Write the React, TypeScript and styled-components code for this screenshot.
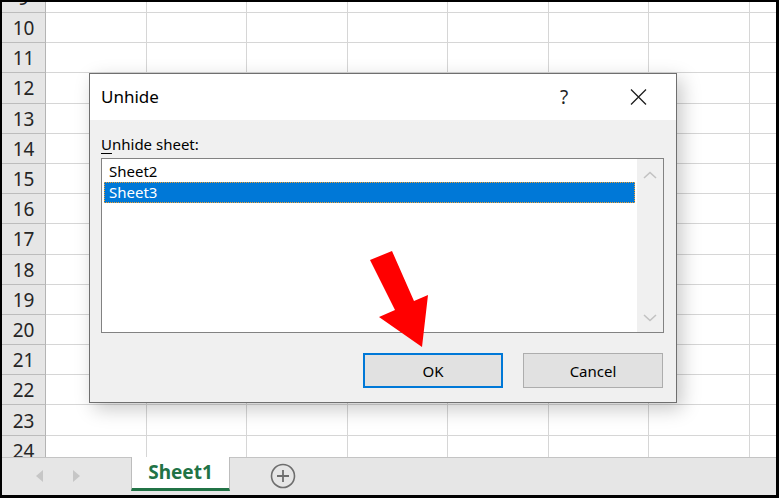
import React from "react"
import styled, { createGlobalStyle } from "styled-components"

const GlobalStyle = createGlobalStyle`
  html, body {
    margin: 0;
    padding: 0;
    background: #ffffff;
  }
  * {
    box-sizing: border-box;
  }
`

const rows = Array.from({ length: 16 }, (_, i) => i + 9)
const cols = Array.from({ length: 8 }, (_, i) => i)
const sheets = ["Sheet2", "Sheet3"]

const App = () => {
  return (
    <>
      <GlobalStyle />
      <Frame>
        <Grid>
          <Rows>
            {rows.map((r) => (
              <Row key={r}>
                <RowHead>{r}</RowHead>
                {cols.map((c) => (
                  <Cell key={c} />
                ))}
              </Row>
            ))}
          </Rows>
        </Grid>

        <TabBar>
          <Nav>
            <NavArrow $dir="left" />
            <NavArrow $dir="right" />
          </Nav>
          <Tab>Sheet1</Tab>
          <AddSheet>
            <svg width="26" height="26" viewBox="0 0 26 26">
              <circle cx="13" cy="13" r="11.5" fill="none" stroke="#6e6e6e" strokeWidth="1.6" />
              <path d="M13 7v12M7 13h12" stroke="#6e6e6e" strokeWidth="1.8" />
            </svg>
          </AddSheet>
        </TabBar>

        <Dialog>
          <TitleBar>
            <Title>Unhide</Title>
            <TitleBtn $w={72}>?</TitleBtn>
            <TitleBtn $w={76}>
              <svg width="17" height="16" viewBox="0 0 17 16">
                <path d="M1 0.5L16 15.5M16 0.5L1 15.5" stroke="#1f1f1f" strokeWidth="1.3" />
              </svg>
            </TitleBtn>
          </TitleBar>
          <Body>
            <Label>
              <u>U</u>nhide sheet:
            </Label>
            <ListBox>
              <Items>
                {sheets.map((s) => (
                  <Item key={s} $selected={s === "Sheet3"}>
                    {s}
                  </Item>
                ))}
              </Items>
              <ScrollBar>
                <svg width="14" height="8" viewBox="0 0 14 8">
                  <path d="M1 7L7 1.5L13 7" fill="none" stroke="#c2c2c2" strokeWidth="1.6" />
                </svg>
                <svg width="14" height="8" viewBox="0 0 14 8">
                  <path d="M1 1L7 6.5L13 1" fill="none" stroke="#c2c2c2" strokeWidth="1.6" />
                </svg>
              </ScrollBar>
            </ListBox>
            <Buttons>
              <Button $default>OK</Button>
              <Button>Cancel</Button>
            </Buttons>
          </Body>
        </Dialog>

        <Arrow width="62" height="100" viewBox="0 0 62 100">
          <polygon points="2,11 24,2 46,52 60,46 54,98 11,68 27,61" fill="#ff0000" />
        </Arrow>
      </Frame>
    </>
  )
}

export default App

const font = `"Noto Sans", "Open Sans", "Liberation Sans", sans-serif`

const Frame = styled.div`
  position: relative;
  width: 779px;
  height: 498px;
  border-style: solid;
  border-color: #000;
  border-width: 2px 3px 3px 2px;
  display: flex;
  flex-direction: column;
  overflow: hidden;
  font-family: ${font};
`

const Grid = styled.div`
  height: 455px;
  overflow: hidden;
  background: #fff;
`

const Rows = styled.div`
  margin-top: -19.2px;
`

const Row = styled.div`
  display: flex;
  height: 30.2px;
`

const RowHead = styled.div`
  width: 44px;
  flex: none;
  background: #e6e6e6;
  border-right: 1px solid #b4b4b4;
  border-bottom: 1px solid #bcbcbc;
  display: flex;
  align-items: center;
  justify-content: center;
  font-size: 19px;
  color: #262626;
  padding-top: 1px;
`

const Cell = styled.div`
  width: 100.5px;
  flex: none;
  border-right: 1px solid #d6d6d6;
  border-bottom: 1px solid #d6d6d6;
`

const TabBar = styled.div`
  height: 38px;
  background: #e6e6e6;
  border-top: 1px solid #c4c4c4;
  display: flex;
  align-items: flex-start;
`

const Nav = styled.div`
  width: 129px;
  height: 36px;
  display: flex;
  align-items: center;
  padding-left: 34px;
  gap: 30px;
`

const NavArrow = styled.span<{ $dir: "left" | "right" }>`
  width: 0;
  height: 0;
  border-top: 6px solid transparent;
  border-bottom: 6px solid transparent;
  ${(p) =>
    p.$dir === "left"
      ? "border-right: 7px solid #c6c6c6;"
      : "border-left: 7px solid #c6c6c6;"}
`

const Tab = styled.div`
  width: 99px;
  height: 34px;
  margin-top: -1px;
  background: #fff;
  border-left: 1px solid #bdbdbd;
  border-right: 1px solid #bdbdbd;
  border-bottom: 3px solid #217346;
  display: flex;
  align-items: center;
  justify-content: center;
  color: #217346;
  font-weight: 700;
  font-size: 19px;
  padding-bottom: 2px;
`

const AddSheet = styled.div`
  margin-left: 40px;
  height: 36px;
  display: flex;
  align-items: center;
`

const Dialog = styled.div`
  position: absolute;
  left: 87px;
  top: 71px;
  width: 588px;
  height: 330px;
  border: 1px solid #6f6f6f;
  background: #f0f0f0;
  box-shadow: 5px 6px 18px rgba(0, 0, 0, 0.22);
  display: flex;
  flex-direction: column;
`

const TitleBar = styled.div`
  height: 46px;
  background: #fff;
  display: flex;
  align-items: center;
  padding-left: 11px;
`

const Title = styled.div`
  flex: 1;
  font-size: 17px;
  color: #000;
  padding-bottom: 1px;
`

const TitleBtn = styled.div<{ $w: number }>`
  width: ${(p) => p.$w}px;
  height: 46px;
  display: flex;
  align-items: center;
  justify-content: center;
  font-size: 19px;
  color: #1f1f1f;
`

const Body = styled.div`
  flex: 1;
  padding: 14px 12px 0 11px;
  display: flex;
  flex-direction: column;
`

const Label = styled.div`
  font-size: 15px;
  line-height: 20px;
  color: #000;
  margin-bottom: 4px;

  u {
    text-decoration-thickness: 1px;
    text-underline-offset: 3px;
  }
`

const ListBox = styled.div`
  height: 175px;
  border: 1px solid #828282;
  background: #fff;
  display: flex;
`

const Items = styled.div`
  flex: 1;
  padding: 2px 2px 0 2px;
`

const Item = styled.div<{ $selected?: boolean }>`
  height: 21px;
  padding-left: 4px;
  font-size: 15px;
  line-height: 19px;
  color: ${(p) => (p.$selected ? "#fff" : "#000")};
  background: ${(p) => (p.$selected ? "#0078d7" : "transparent")};
  border: 1px ${(p) => (p.$selected ? "dotted #f0a030" : "solid transparent")};
`

const ScrollBar = styled.div`
  width: 26px;
  background: #f0f0f0;
  display: flex;
  flex-direction: column;
  align-items: center;
  justify-content: space-between;
  padding: 12px 0 10px;
`

const Buttons = styled.div`
  display: flex;
  justify-content: flex-end;
  gap: 20px;
  margin-top: 20px;
  padding-right: 1px;
`

const Button = styled.button<{ $default?: boolean }>`
  width: 140px;
  height: 35px;
  background: #e1e1e1;
  border: ${(p) => (p.$default ? "2px solid #0078d7" : "1px solid #adadad")};
  font-family: ${font};
  font-size: 15px;
  color: #000;
  padding: 0;
`

const Arrow = styled.svg`
  position: absolute;
  left: 366px;
  top: 247px;
`
